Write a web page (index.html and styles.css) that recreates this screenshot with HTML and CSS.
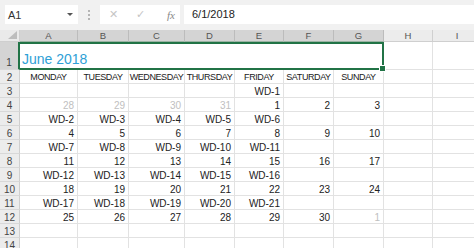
FILE: index.html
```html
<!DOCTYPE html>
<html lang="en">
<head>
    <meta charset="UTF-8">
    <title>June 2018</title>
    <link rel="stylesheet" href="styles.css">
</head>
<body>
<div class="toolbar">
    <div class="namebox"><span>A1</span><span class="arrow"></span></div>
    <div class="grip"></div>
    <div class="fxbox">
        <span class="tool">&#x2715;</span>
        <span class="tool">&#x2713;</span>
        <span class="fx">fx</span>
    </div>
    <div class="value">6/1/2018</div>
</div>
<div class="sheet">
    <div class="corner"><span class="tri"></span></div>
    <div class="col sel">A</div><div class="col sel">B</div><div class="col sel">C</div><div class="col sel">D</div><div class="col sel">E</div><div class="col sel">F</div><div class="col sel">G</div><div class="col">H</div><div class="col">I</div>

    <div class="row sel tall">1</div>
    <div class="title">June 2018<span class="handle"></span></div><div class="c"></div><div class="c"></div>

    <div class="row">2</div>
    <div class="c day">MONDAY</div><div class="c day">TUESDAY</div><div class="c day">WEDNESDAY</div><div class="c day">THURSDAY</div><div class="c day">FRIDAY</div><div class="c day">SATURDAY</div><div class="c day">SUNDAY</div><div class="c"></div><div class="c"></div>

    <div class="row">3</div>
    <div class="c"></div><div class="c"></div><div class="c"></div><div class="c"></div><div class="c">WD-1</div><div class="c"></div><div class="c"></div><div class="c"></div><div class="c"></div>

    <div class="row">4</div>
    <div class="c out">28</div><div class="c out">29</div><div class="c out">30</div><div class="c out">31</div><div class="c">1</div><div class="c">2</div><div class="c">3</div><div class="c"></div><div class="c"></div>

    <div class="row">5</div>
    <div class="c">WD-2</div><div class="c">WD-3</div><div class="c">WD-4</div><div class="c">WD-5</div><div class="c">WD-6</div><div class="c"></div><div class="c"></div><div class="c"></div><div class="c"></div>

    <div class="row">6</div>
    <div class="c">4</div><div class="c">5</div><div class="c">6</div><div class="c">7</div><div class="c">8</div><div class="c">9</div><div class="c">10</div><div class="c"></div><div class="c"></div>

    <div class="row">7</div>
    <div class="c">WD-7</div><div class="c">WD-8</div><div class="c">WD-9</div><div class="c">WD-10</div><div class="c">WD-11</div><div class="c"></div><div class="c"></div><div class="c"></div><div class="c"></div>

    <div class="row">8</div>
    <div class="c">11</div><div class="c">12</div><div class="c">13</div><div class="c">14</div><div class="c">15</div><div class="c">16</div><div class="c">17</div><div class="c"></div><div class="c"></div>

    <div class="row">9</div>
    <div class="c">WD-12</div><div class="c">WD-13</div><div class="c">WD-14</div><div class="c">WD-15</div><div class="c">WD-16</div><div class="c"></div><div class="c"></div><div class="c"></div><div class="c"></div>

    <div class="row">10</div>
    <div class="c">18</div><div class="c">19</div><div class="c">20</div><div class="c">21</div><div class="c">22</div><div class="c">23</div><div class="c">24</div><div class="c"></div><div class="c"></div>

    <div class="row">11</div>
    <div class="c">WD-17</div><div class="c">WD-18</div><div class="c">WD-19</div><div class="c">WD-20</div><div class="c">WD-21</div><div class="c"></div><div class="c"></div><div class="c"></div><div class="c"></div>

    <div class="row">12</div>
    <div class="c">25</div><div class="c">26</div><div class="c">27</div><div class="c">28</div><div class="c">29</div><div class="c">30</div><div class="c out">1</div><div class="c"></div><div class="c"></div>

    <div class="row">13</div>
    <div class="c"></div><div class="c"></div><div class="c"></div><div class="c"></div><div class="c"></div><div class="c"></div><div class="c"></div><div class="c"></div><div class="c"></div>

    <div class="row">14</div>
    <div class="c"></div><div class="c"></div><div class="c"></div><div class="c"></div><div class="c"></div><div class="c"></div><div class="c"></div><div class="c"></div><div class="c"></div>
</div>
</body>
</html>
```

FILE: styles.css
```css
body{
    margin:0;
    width:474px;
    height:248px;
    overflow:hidden;
    background-color:#fff;
    font-family:"Liberation Sans",Arial,sans-serif;
    color:#222;
}
.toolbar{
    height:30px;
    background-color:#f1f1f1;
    display:flex;
    align-items:flex-start;
    padding-top:5px;
    box-sizing:border-box;
}
.namebox{
    margin-left:5px;
    width:73px;
    height:19px;
    background-color:#fff;
    display:flex;
    align-items:center;
    justify-content:space-between;
    padding:0 5px 0 3px;
    box-sizing:border-box;
    font-size:11px;
    color:#333;
}
.arrow{
    border-left:3px solid transparent;
    border-right:3px solid transparent;
    border-top:3px solid #555;
}
.grip{
    width:2px;
    height:11px;
    margin:4px 10px 0 10px;
    background-image:radial-gradient(circle,#b5b5b5 0.8px,transparent 1px);
    background-size:2px 4px;
}
.fxbox{
    width:80px;
    height:19px;
    background-color:#fff;
    display:flex;
    align-items:center;
    box-sizing:border-box;
    padding-left:9px;
    gap:18px;
    font-size:11px;
}
.tool{
    color:#c5c5c5;
}
.fx{
    font-family:"Liberation Serif",serif;
    font-style:italic;
    color:#888;
    margin-left:4px;
}
.value{
    flex:1;
    height:19px;
    margin-left:4px;
    background-color:#fff;
    font-size:11px;
    line-height:19px;
    padding-left:8px;
    color:#222;
}
.sheet{
    display:grid;
    grid-template-columns:20px 58px 51px 56px 50px 49px 50px 50px 49px 49px;
    grid-template-rows:12px 28px repeat(13,14px);
    font-size:10px;
}
.corner{
    background-color:#eaeaea;
    border-right:1px solid #cfcfcf;
    border-bottom:1px solid #cfcfcf;
    box-sizing:border-box;
    display:flex;
    align-items:flex-end;
    justify-content:flex-end;
    padding:0 2px 2px 0;
}
.tri{
    width:9px;
    height:8px;
    background-color:#bdbdbd;
    clip-path:polygon(100% 0,100% 100%,0 100%);
}
.col{
    background-color:#ececec;
    border-right:1px solid #d0d0d0;
    border-bottom:1px solid #cfcfcf;
    box-sizing:border-box;
    text-align:center;
    font-size:9.5px;
    line-height:11px;
    color:#555;
}
.col.sel{
    background-color:#d4d4d4;
    border-right-color:#bcbcbc;
    border-bottom:1px solid #9bb3a3;
}
.row{
    background-color:#ececec;
    border-right:1px solid #cfcfcf;
    border-bottom:1px solid #d8d8d8;
    box-sizing:border-box;
    text-align:center;
    font-size:10px;
    padding-top:1px;
    line-height:13px;
    color:#444;
}
.row.tall{
    padding-top:14px;
}
.row.sel{
    background-color:#d4d4d4;
    border-right:2px solid #217346;
}
.c{
    border-right:1px solid #e2e2e2;
    border-bottom:1px solid #e2e2e2;
    box-sizing:border-box;
    text-align:right;
    padding:1px 3px 0 0;
    line-height:13px;
    white-space:nowrap;
}
.day{
    text-align:center;
    padding-right:0;
    font-size:9px;
    letter-spacing:-0.4px;
    color:#1a1a1a;
}
.out{
    color:#c0c0c0;
}
.title{
    grid-column:span 7;
    position:relative;
    border:2px solid #217346;
    border-left:none;
    box-sizing:border-box;
    font-size:14px;
    color:#2ea0d6;
    padding:6px 0 0 2px;
    line-height:18px;
}
.handle{
    position:absolute;
    right:-4px;
    bottom:-4px;
    width:5px;
    height:5px;
    background-color:#217346;
    border:1px solid #fff;
}
```
